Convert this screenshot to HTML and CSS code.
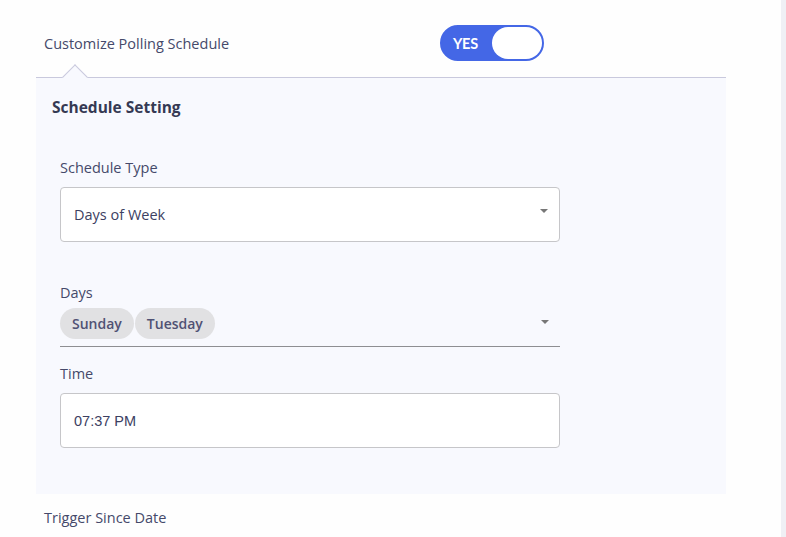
FILE: index.html
```html
<!DOCTYPE html>
<html>
<head>
<meta charset="utf-8">
<link rel="stylesheet" href="styles.css">
</head>
<body>
<div class="page">
  <div class="content">
    <div class="row-head">
      <span class="head-label">Customize Polling Schedule</span>
      <div class="toggle">
        <span class="toggle-text">YES</span>
        <span class="knob"></span>
      </div>
    </div>
    <div class="panel">
      <div class="panel-title">Schedule Setting</div>
      <div class="field field-type">
        <div class="label">Schedule Type</div>
        <div class="box">
          <span class="value">Days of Week</span>
          <span class="caret"></span>
        </div>
      </div>
      <div class="field field-days">
        <div class="label">Days</div>
        <div class="chips-line">
          <div class="chips">
            <span class="chip">Sunday</span>
            <span class="chip">Tuesday</span>
          </div>
          <span class="caret"></span>
        </div>
      </div>
      <div class="field field-time">
        <div class="label">Time</div>
        <div class="box">
          <span class="value time">07:37 PM</span>
        </div>
      </div>
    </div>
    <div class="foot-label">Trigger Since Date</div>
  </div>
  <div class="scrollbar"></div>
</div>
</body>
</html>
```
FILE: styles.css
```css
html, body {
  margin: 0;
  padding: 0;
  height: 100%;
  overflow: hidden;
}
body {
  background: #fefefe;
  font-family: "Open Sans", "Lato", sans-serif;
  color: #45496a;
}
.page {
  display: flex;
  height: 537px;
}
.content {
  width: 690px;
  margin-left: 36px;
  flex: none;
}
.scrollbar {
  margin-left: auto;
  width: 5px;
  background: #eff0f5;
}
.row-head {
  display: flex;
  align-items: center;
  height: 36px;
  margin-top: 25px;
  padding-left: 8px;
}
.head-label {
  font-size: 14.5px;
  width: 396px;
}
.toggle {
  width: 104px;
  height: 36px;
  box-sizing: border-box;
  border-radius: 18px;
  background: #4467e6;
  border: 2px solid #4467e6;
  display: flex;
  align-items: center;
  justify-content: space-between;
  padding-left: 11px;
}
.toggle-text {
  color: #fff;
  font-family: "Lato", sans-serif;
  font-size: 14.5px;
  font-weight: 700;
  letter-spacing: -0.3px;
}
.knob {
  width: 50px;
  height: 32px;
  border-radius: 16px;
  background: #fff;
}
.panel {
  position: relative;
  margin-top: 16px;
  border-top: 1px solid #c9c9dd;
  background: #f8f9fe;
  height: 417px;
  padding-top: 18px;
  box-sizing: border-box;
}
.panel::before {
  content: "";
  position: absolute;
  left: 30px;
  top: -10px;
  width: 18px;
  height: 18px;
  background: #f8f9fe;
  border-left: 1px solid #c9c9dd;
  border-top: 1px solid #c9c9dd;
  transform: rotate(45deg);
  transform-origin: center;
  box-sizing: border-box;
}
.panel-title {
  padding-left: 16px;
  font-size: 15.5px;
  font-weight: 700;
  color: #353953;
  height: 22px;
  line-height: 22px;
}
.field {
  padding-left: 24px;
  width: 500px;
}
.label {
  font-size: 14.5px;
  line-height: 20px;
  height: 20px;
}
.field-type {
  margin-top: 40px;
}
.field-type .label {
  margin-bottom: 9px;
}
.box {
  height: 55px;
  box-sizing: border-box;
  background: #fff;
  border: 1px solid #c6c6c9;
  border-radius: 4px;
  display: flex;
  align-items: center;
  padding: 0 11px 0 13px;
}
.value {
  flex: 1;
  font-size: 14.5px;
  color: #3c4062;
}
.value.time {
  font-family: "Liberation Sans", Arial, sans-serif;
  font-size: 14.5px;
}
.caret {
  width: 0;
  height: 0;
  border-left: 4px solid transparent;
  border-right: 4px solid transparent;
  border-top: 4px solid #777;
  margin-top: -8px;
}
.field-days {
  margin-top: 41px;
}
.field-days .label {
  margin-bottom: 5px;
}
.chips-line {
  display: flex;
  align-items: center;
  border-bottom: 1px solid #8e8e92;
  padding-bottom: 7px;
  padding-right: 11px;
}
.chips {
  flex: 1;
  display: flex;
  gap: 1px;
}
.chip {
  height: 31px;
  line-height: 31px;
  border-radius: 16px;
  background: #e1e1e3;
  padding: 0 12px;
  font-size: 14px;
  font-weight: 600;
  color: #505274;
}
.chips-line .caret {
  margin-top: -4px;
}
.field-time {
  margin-top: 17px;
}
.field-time .label {
  margin-bottom: 9px;
}
.foot-label {
  margin-top: 14px;
  padding-left: 8px;
  font-size: 14.5px;
  line-height: 20px;
}
```
